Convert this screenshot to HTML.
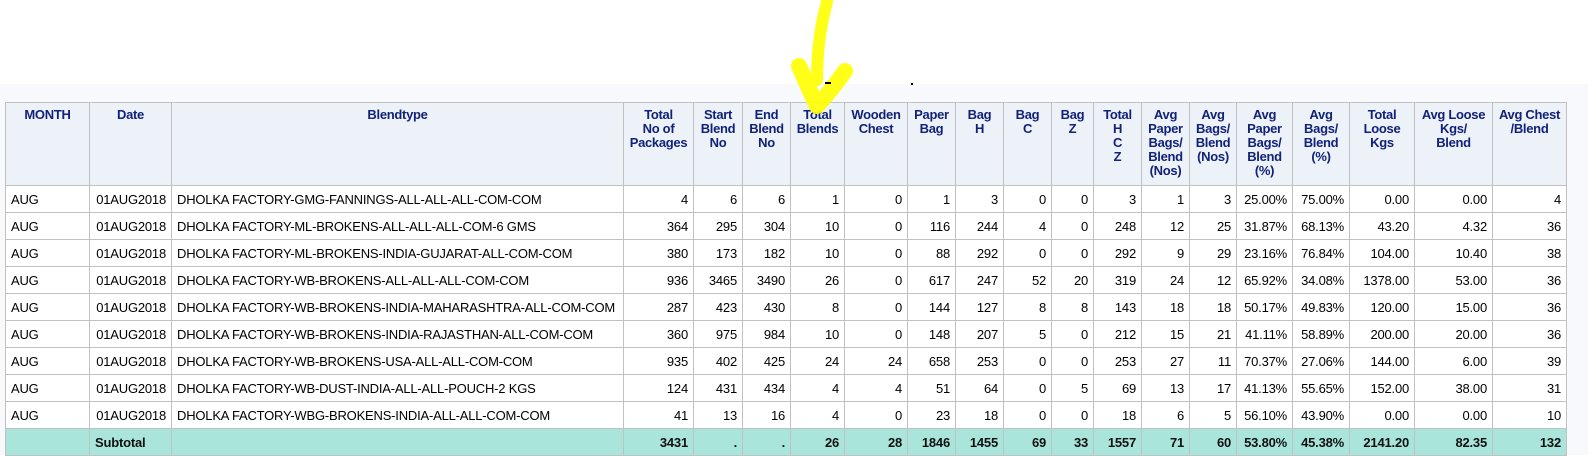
<!DOCTYPE html>
<html><head><meta charset="utf-8"><style>
html,body{margin:0;padding:0;width:1588px;height:455px;overflow:hidden;background:#fff;font-family:"Liberation Sans",Arial,sans-serif}
.bg{position:absolute;left:0;top:84px;width:1588px;height:371px;background:#f8f9fc}
table{position:absolute;left:5px;top:102px;width:1561px;border-collapse:collapse;table-layout:fixed;font-size:13px;}
td,th{border:1px solid #c1c1c1;padding:0 5px;white-space:nowrap;overflow:hidden}
th{background:#edf2f9;color:#112277;font-weight:bold;vertical-align:top;text-align:center;height:77px;padding-top:5px;line-height:14px;white-space:nowrap;padding-left:1px;padding-right:1px;letter-spacing:-0.3px}
td{height:26px;background:#fff;color:#000;text-align:right;letter-spacing:-0.2px}
td.l{text-align:left}
tr.s td{background:#aae5db;font-weight:bold;color:#111}
svg{position:absolute;left:0;top:0}
.dot{position:absolute;width:2px;height:2px;background:#000}
</style></head><body>
<div class="bg"></div>
<div class="dot" style="left:911px;top:83px"></div>
<table>
<colgroup>
<col style="width:84px"><col style="width:82px"><col style="width:452px"><col style="width:70px"><col style="width:49px"><col style="width:48px"><col style="width:54px"><col style="width:63px"><col style="width:48px"><col style="width:48px"><col style="width:48px"><col style="width:42px"><col style="width:48px"><col style="width:48px"><col style="width:47px"><col style="width:56px"><col style="width:57px"><col style="width:65px"><col style="width:78px"><col style="width:74px">
</colgroup>
<tr><th>MONTH</th><th>Date</th><th>Blendtype</th><th>Total<br>No of<br>Packages</th><th>Start<br>Blend<br>No</th><th>End<br>Blend<br>No</th><th>Total<br>Blends</th><th>Wooden<br>Chest</th><th>Paper<br>Bag</th><th>Bag<br>H</th><th>Bag<br>C</th><th>Bag<br>Z</th><th>Total<br>H<br>C<br>Z</th><th>Avg<br>Paper<br>Bags/<br>Blend<br>(Nos)</th><th>Avg<br>Bags/<br>Blend<br>(Nos)</th><th>Avg<br>Paper<br>Bags/<br>Blend<br>(%)</th><th>Avg<br>Bags/<br>Blend<br>(%)</th><th>Total<br>Loose<br>Kgs</th><th>Avg Loose<br>Kgs/<br>Blend</th><th>Avg Chest<br>/Blend</th></tr>
<tr><td class="l">AUG</td><td>01AUG2018</td><td class="l">DHOLKA FACTORY-GMG-FANNINGS-ALL-ALL-ALL-COM-COM</td><td>4</td><td>6</td><td>6</td><td>1</td><td>0</td><td>1</td><td>3</td><td>0</td><td>0</td><td>3</td><td>1</td><td>3</td><td>25.00%</td><td>75.00%</td><td>0.00</td><td>0.00</td><td>4</td></tr>
<tr><td class="l">AUG</td><td>01AUG2018</td><td class="l">DHOLKA FACTORY-ML-BROKENS-ALL-ALL-ALL-COM-6 GMS</td><td>364</td><td>295</td><td>304</td><td>10</td><td>0</td><td>116</td><td>244</td><td>4</td><td>0</td><td>248</td><td>12</td><td>25</td><td>31.87%</td><td>68.13%</td><td>43.20</td><td>4.32</td><td>36</td></tr>
<tr><td class="l">AUG</td><td>01AUG2018</td><td class="l">DHOLKA FACTORY-ML-BROKENS-INDIA-GUJARAT-ALL-COM-COM</td><td>380</td><td>173</td><td>182</td><td>10</td><td>0</td><td>88</td><td>292</td><td>0</td><td>0</td><td>292</td><td>9</td><td>29</td><td>23.16%</td><td>76.84%</td><td>104.00</td><td>10.40</td><td>38</td></tr>
<tr><td class="l">AUG</td><td>01AUG2018</td><td class="l">DHOLKA FACTORY-WB-BROKENS-ALL-ALL-ALL-COM-COM</td><td>936</td><td>3465</td><td>3490</td><td>26</td><td>0</td><td>617</td><td>247</td><td>52</td><td>20</td><td>319</td><td>24</td><td>12</td><td>65.92%</td><td>34.08%</td><td>1378.00</td><td>53.00</td><td>36</td></tr>
<tr><td class="l">AUG</td><td>01AUG2018</td><td class="l">DHOLKA FACTORY-WB-BROKENS-INDIA-MAHARASHTRA-ALL-COM-COM</td><td>287</td><td>423</td><td>430</td><td>8</td><td>0</td><td>144</td><td>127</td><td>8</td><td>8</td><td>143</td><td>18</td><td>18</td><td>50.17%</td><td>49.83%</td><td>120.00</td><td>15.00</td><td>36</td></tr>
<tr><td class="l">AUG</td><td>01AUG2018</td><td class="l">DHOLKA FACTORY-WB-BROKENS-INDIA-RAJASTHAN-ALL-COM-COM</td><td>360</td><td>975</td><td>984</td><td>10</td><td>0</td><td>148</td><td>207</td><td>5</td><td>0</td><td>212</td><td>15</td><td>21</td><td>41.11%</td><td>58.89%</td><td>200.00</td><td>20.00</td><td>36</td></tr>
<tr><td class="l">AUG</td><td>01AUG2018</td><td class="l">DHOLKA FACTORY-WB-BROKENS-USA-ALL-ALL-COM-COM</td><td>935</td><td>402</td><td>425</td><td>24</td><td>24</td><td>658</td><td>253</td><td>0</td><td>0</td><td>253</td><td>27</td><td>11</td><td>70.37%</td><td>27.06%</td><td>144.00</td><td>6.00</td><td>39</td></tr>
<tr><td class="l">AUG</td><td>01AUG2018</td><td class="l">DHOLKA FACTORY-WB-DUST-INDIA-ALL-ALL-POUCH-2 KGS</td><td>124</td><td>431</td><td>434</td><td>4</td><td>4</td><td>51</td><td>64</td><td>0</td><td>5</td><td>69</td><td>13</td><td>17</td><td>41.13%</td><td>55.65%</td><td>152.00</td><td>38.00</td><td>31</td></tr>
<tr><td class="l">AUG</td><td>01AUG2018</td><td class="l">DHOLKA FACTORY-WBG-BROKENS-INDIA-ALL-ALL-COM-COM</td><td>41</td><td>13</td><td>16</td><td>4</td><td>0</td><td>23</td><td>18</td><td>0</td><td>0</td><td>18</td><td>6</td><td>5</td><td>56.10%</td><td>43.90%</td><td>0.00</td><td>0.00</td><td>10</td></tr>
<tr class="s"><td></td><td class="l">Subtotal</td><td></td><td>3431</td><td>.</td><td>.</td><td>26</td><td>28</td><td>1846</td><td>1455</td><td>69</td><td>33</td><td>1557</td><td>71</td><td>60</td><td>53.80%</td><td>45.38%</td><td>2141.20</td><td>82.35</td><td>132</td></tr>
</table>
<svg width="1588" height="455"><g fill="none" stroke="#ffff00" stroke-linecap="round" stroke-linejoin="round" opacity="0.9"><path d="M827 2 C822 20 817 45 817 80" stroke-width="12"/><path d="M799 66 C806 82 812 96 817 106 C826 96 836 84 845 71" stroke-width="16"/></g><rect x="825" y="82" width="6" height="2" fill="#000"/></svg>
</body></html>
